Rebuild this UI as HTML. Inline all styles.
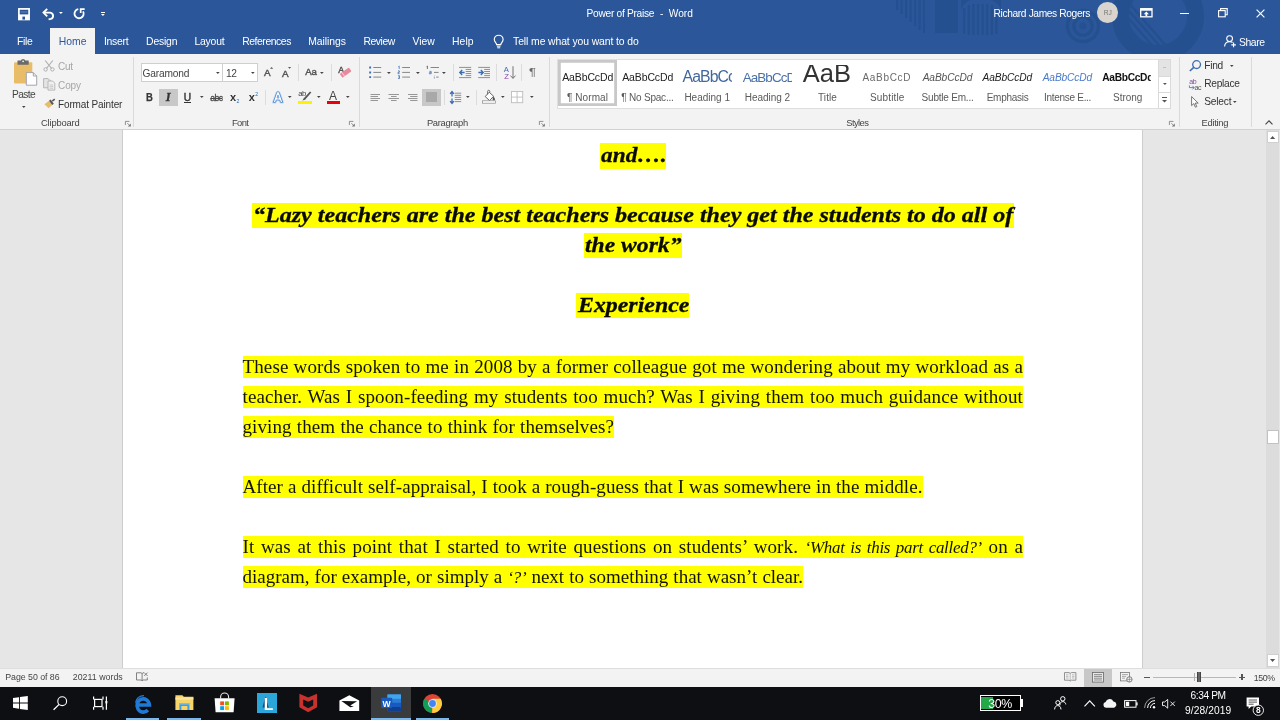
<!DOCTYPE html>
<html lang="en"><head><meta charset="utf-8"><title>Power of Praise - Word</title>
<style>
*{box-sizing:border-box;margin:0;padding:0}
html,body{width:1280px;height:720px;overflow:hidden;background:#e6e6e6;font-family:"Liberation Sans",sans-serif;font-size:10px;color:#444}
.t{position:absolute;white-space:nowrap;display:block}
.i{position:absolute;display:block;overflow:visible}
.b{position:absolute}
#titlebar{position:absolute;left:0;top:0;width:1280px;height:54px;background:#2b579a;overflow:hidden}
#hometab{position:absolute;left:50.4px;top:28.4px;width:44.2px;height:26px;background:#f3f3f3}
#ribbon{position:absolute;left:0;top:54px;width:1280px;height:75.6px;background:#f3f3f3;border-bottom:1px solid #d2d2d2}
#doc{position:absolute;left:0;top:130px;width:1280px;height:538px;background:#e6e6e6;overflow:hidden}
#page{position:absolute;left:122px;top:0;width:1021px;height:538px;background:#fff;border-left:1px solid #cdcdcd;border-right:1px solid #cdcdcd}
#status{position:absolute;left:0;top:668px;width:1280px;height:19px;background:#f3f3f3;border-top:1px solid #dedede}
#taskbar{position:absolute;left:0;top:687px;width:1280px;height:33px;background:#0e0f12}
.ln{position:absolute;left:242.5px;width:780.5px;height:22.4px;font-family:"Liberation Serif",serif;font-size:19px;line-height:22.4px;color:#141400;white-space:nowrap;background:#ffff00;text-align:justify;text-align-last:justify;letter-spacing:0.12px}
.hd{position:absolute;height:25.6px;font-family:"Liberation Serif",serif;font-size:22px;line-height:25.6px;color:#0a0a00;white-space:nowrap;background:#ffff00;font-weight:bold;font-style:italic;text-align:left}
.hd span{position:relative;top:-0.6px;left:1.2px;display:inline-block;transform-origin:0 50%;-webkit-text-stroke:0.3px #0a0a00}
#root{position:absolute;left:0;top:0;width:1280px;height:720px;will-change:transform}
.ln i{font-size:17px;letter-spacing:-0.3px}
</style></head><body>
<div id="root">
<div id="titlebar">
<svg class="i" style="left:840px;top:0" width="440" height="54" viewBox="840 0 440 54">
<g fill="#1f4a88" opacity="0.5">
<rect x="896" y="0" width="2.2" height="10"/><rect x="900.5" y="0" width="2.2" height="14"/><rect x="905" y="0" width="2.2" height="18"/><rect x="909.5" y="0" width="2.2" height="22"/><rect x="914" y="0" width="2.2" height="26"/><rect x="918.5" y="0" width="2.2" height="30"/><rect x="923" y="0" width="2.2" height="33"/>
<path d="M935 0h23v33h-23z"/>
<path d="M961 0h40v12a20 14 0 0 0-40 0z"/>
<rect x="963" y="8" width="2.4" height="26"/><rect x="967.6" y="5" width="2.4" height="30"/><rect x="972.2" y="4" width="2.4" height="31"/><rect x="976.8" y="4" width="2.4" height="31"/><rect x="981.4" y="4" width="2.4" height="31"/><rect x="986" y="4" width="2.4" height="31"/><rect x="990.6" y="5" width="2.4" height="30"/><rect x="995.2" y="8" width="2.4" height="26"/>
<circle cx="1083" cy="26" r="3.6"/>
</g>
<g fill="none" stroke="#1f4a88" opacity="0.5">
<circle cx="1083" cy="26" r="15.5" stroke-width="3.4"/><circle cx="1083" cy="26" r="9.2" stroke-width="3.4"/>
<circle cx="1158" cy="16" r="37.5" stroke-width="17"/>
<path d="M1108 4l44 50M1114 2l46 52M1121 2l44 50M1128 2l40 46" stroke-width="2.6"/>
</g></svg>
<div id="hometab"></div>
<svg class="i" style="left:18px;top:7.6px;" width="12" height="12.4" viewBox="0 0 12 12.4"><rect x="0.9" y="0.9" width="10.2" height="10.6" fill="none" stroke="#fff" stroke-width="1.7"/><rect x="0.9" y="6.4" width="10.2" height="5.1" fill="#fff"/><rect x="4.4" y="8.6" width="2.6" height="3" fill="#2b579a"/><rect x="2.6" y="3.6" width="6.8" height="0.8" fill="#fff" opacity="0.35"/></svg>
<svg class="i" style="left:42px;top:8px;" width="14" height="12" viewBox="0 0 14 12"><path d="M1.6 4.6h6.6a3.6 3.3 0 0 1 0.6 6.3l-2.2 0.5" fill="none" stroke="#fff" stroke-width="1.9"/><path d="M5.2 0.9L1.5 4.6 5.2 8.3" fill="none" stroke="#fff" stroke-width="1.9"/></svg>
<svg class="i" style="left:59.4px;top:12px;" width="3.8" height="2" viewBox="0 0 3.8 2"><path d="M0 0H3.8 L1.9 2 Z" fill="#fff"/></svg>
<svg class="i" style="left:72.6px;top:7.4px;" width="12.4" height="12.6" viewBox="0 0 12.4 12.6"><path d="M5.3 2.1A4.6 4.6 0 1 0 10.1 4.4" fill="none" stroke="#fff" stroke-width="1.8"/><path d="M7.7 5.9V2.1H11.7" fill="none" stroke="#fff" stroke-width="1.7"/></svg>
<div class="b" style="left:101px;top:12px;width:3.8px;height:1px;background:#fff"></div>
<svg class="i" style="left:101px;top:14px;" width="3.8" height="2" viewBox="0 0 3.8 2"><path d="M0 0H3.8 L1.9 2 Z" fill="#fff"/></svg>
<span class="t" id="t0" style="left:586.60px;top:8.57px;font-size:10.2px;line-height:10.2px;color:#fff;letter-spacing:-0.294px;">Power of Praise</span>
<span class="t" id="t1" style="left:660.00px;top:8.57px;font-size:10.2px;line-height:10.2px;color:#fff;letter-spacing:0.000px;">-</span>
<span class="t" id="t2" style="left:668.75px;top:8.57px;font-size:10.2px;line-height:10.2px;color:#fff;letter-spacing:-0.011px;">Word</span>
<span class="t" id="t3" style="left:993.60px;top:9.07px;font-size:10.2px;line-height:10.2px;color:#fff;letter-spacing:-0.361px;">Richard James Rogers</span>
<div class="b" style="left:1097.4px;top:2.1px;width:20.6px;height:20.6px;border-radius:50%;background:#d9d4cd"></div>
<span class="t" id="t4" style="left:1103.80px;top:10.01px;font-size:6.6px;line-height:6.6px;color:#777;letter-spacing:-0.033px;">RJ</span>
<svg class="i" style="left:1140px;top:8px;" width="13" height="9.5" viewBox="0 0 13 9.5"><rect x="0.7" y="0.7" width="11.3" height="8.1" fill="none" stroke="#fff" stroke-width="1.3"/><rect x="0.7" y="0.7" width="11.3" height="2" fill="#fff"/><path d="M6.35 3.6l2.6 2.6h-1.7v1.9h-1.8v-1.9h-1.7z" fill="#fff"/></svg>
<div class="b" style="left:1180.4px;top:12.9px;width:8.4px;height:1.1px;background:#fff"></div>
<svg class="i" style="left:1217.5px;top:8px;" width="10" height="9.5" viewBox="0 0 10 9.5"><rect x="0.6" y="2.6" width="6.6" height="6.2" fill="none" stroke="#fff" stroke-width="1.1"/><path d="M2.6 2.6V0.6h6.6v6.2h-2" fill="none" stroke="#fff" stroke-width="1.1"/></svg>
<svg class="i" style="left:1256px;top:8.5px;" width="9" height="9" viewBox="0 0 9 9"><path d="M0.6 0.6l7.8 7.8M8.4 0.6l-7.8 7.8" stroke="#fff" stroke-width="1.15" fill="none"/></svg>
<span class="t" id="t5" style="left:16.90px;top:36.60px;font-size:10.4px;line-height:10.4px;color:#fff;letter-spacing:-0.281px;">File</span>
<span class="t" id="t6" style="left:58.75px;top:36.60px;font-size:10.4px;line-height:10.4px;color:#2b579a;letter-spacing:0.039px;">Home</span>
<span class="t" id="t7" style="left:104.00px;top:36.60px;font-size:10.4px;line-height:10.4px;color:#fff;letter-spacing:-0.271px;">Insert</span>
<span class="t" id="t8" style="left:146.10px;top:36.60px;font-size:10.4px;line-height:10.4px;color:#fff;letter-spacing:-0.206px;">Design</span>
<span class="t" id="t9" style="left:194.40px;top:36.60px;font-size:10.4px;line-height:10.4px;color:#fff;letter-spacing:-0.180px;">Layout</span>
<span class="t" id="t10" style="left:242.20px;top:36.60px;font-size:10.4px;line-height:10.4px;color:#fff;letter-spacing:-0.442px;">References</span>
<span class="t" id="t11" style="left:308.20px;top:36.60px;font-size:10.4px;line-height:10.4px;color:#fff;letter-spacing:-0.063px;">Mailings</span>
<span class="t" id="t12" style="left:363.40px;top:36.60px;font-size:10.4px;line-height:10.4px;color:#fff;letter-spacing:-0.426px;">Review</span>
<span class="t" id="t13" style="left:412.60px;top:36.60px;font-size:10.4px;line-height:10.4px;color:#fff;letter-spacing:-0.055px;">View</span>
<span class="t" id="t14" style="left:452.00px;top:36.60px;font-size:10.4px;line-height:10.4px;color:#fff;letter-spacing:0.087px;">Help</span>
<svg class="i" style="left:492.5px;top:34.5px;" width="11.5" height="14" viewBox="0 0 11.5 14"><path d="M3.6 9.6c0-1.6-2.3-2.4-2.3-5a4.4 4.4 0 0 1 8.8 0c0 2.6-2.3 3.4-2.3 5z" fill="none" stroke="#fff" stroke-width="1.15"/><path d="M3.9 11.2h3.6M4.2 12.8h3" stroke="#fff" stroke-width="1"/></svg>
<span class="t" id="t15" style="left:513.10px;top:36.60px;font-size:10.4px;line-height:10.4px;color:#fff;letter-spacing:-0.100px;">Tell me what you want to do</span>
<svg class="i" style="left:1224px;top:35px;" width="12.5" height="12.5" viewBox="0 0 12.5 12.5"><circle cx="5.6" cy="3.6" r="2.9" fill="none" stroke="#fff" stroke-width="1.1"/><path d="M0.6 11.6c0-3.2 2.2-5 5-5 1.2 0 2.2 0.3 3 0.9" fill="none" stroke="#fff" stroke-width="1.1"/><path d="M9.6 7.6v4.6M7.3 9.9h4.6" stroke="#fff" stroke-width="1.1"/></svg>
<span class="t" id="t16" style="left:1239.00px;top:37.50px;font-size:10.4px;line-height:10.4px;color:#fff;letter-spacing:-0.422px;">Share</span>
</div>
<div id="ribbon"></div>
<svg class="i" style="left:13px;top:59px;" width="25" height="27" viewBox="0 0 25 27"><rect x="1" y="3.2" width="18.3" height="21.3" rx="1" fill="#e9bd68"/><path d="M4.5 1.6h3.3a2.4 2.4 0 0 1 4.6 0h3.3v4.2H4.5z" fill="#6a6a6a"/><circle cx="10.1" cy="2.3" r="0.9" fill="#f3f3f3"/><path d="M13.3 13.6h7l3.4 3.4v9.2H13.3z" fill="#fff" stroke="#9a9aa8" stroke-width="0.9"/><path d="M20.3 13.6v3.4h3.4" fill="none" stroke="#9a9aa8" stroke-width="0.9"/></svg>
<span class="t" id="t17" style="left:12.00px;top:89.77px;font-size:10.2px;line-height:10.2px;color:#444;letter-spacing:-0.590px;">Paste</span>
<svg class="i" style="left:21.7px;top:106.2px;" width="3.6" height="1.9" viewBox="0 0 3.6 1.9"><path d="M0 0H3.6 L1.8 1.9 Z" fill="#444"/></svg>
<svg class="i" style="left:43px;top:60.3px;" width="12" height="11.5" viewBox="0 0 12 11.5"><path d="M2.2 0.5l6.4 8M9.8 0.5l-6.4 8" stroke="#b0b0b0" stroke-width="1.2" fill="none"/><circle cx="2.6" cy="9.4" r="1.7" fill="none" stroke="#b0b0b0" stroke-width="1"/><circle cx="9.4" cy="9.4" r="1.7" fill="none" stroke="#b0b0b0" stroke-width="1"/></svg>
<span class="t" id="t18" style="left:58.00px;top:62.03px;font-size:10px;line-height:10px;color:#a6a6a6;letter-spacing:-0.254px;">Cut</span>
<svg class="i" style="left:43px;top:78.3px;" width="12.5" height="12.6" viewBox="0 0 12.5 12.6"><path d="M0.6 0.6h4.6l2 2v7.2H0.6z" fill="#e4e4e4" stroke="#b0b0b0" stroke-width="0.9"/><path d="M5 3h4.6l2.2 2.2v6.9H5z" fill="#f0f0f0" stroke="#b0b0b0" stroke-width="0.9"/><path d="M6.6 7h3.6M6.6 8.6h3.6M6.6 10.2h3.6" stroke="#b8b8b8" stroke-width="0.7"/></svg>
<span class="t" id="t19" style="left:58.00px;top:80.83px;font-size:10px;line-height:10px;color:#a6a6a6;letter-spacing:-0.090px;">Copy</span>
<svg class="i" style="left:43.5px;top:98px;" width="11.8" height="10.6" viewBox="0 0 11.8 10.6"><path d="M0.4 6.2l4.6-3.4 3.2 4.2-3.6 3.2z" fill="#e9bd68"/><path d="M5 2.8l1.6-1.2 3.2 4.2-1.6 1.2z" fill="#555"/><path d="M7.8 2.6l2.4-2 1 1.2-2.4 2z" fill="#555"/></svg>
<span class="t" id="t20" style="left:58.00px;top:99.73px;font-size:10px;line-height:10px;color:#333;letter-spacing:-0.131px;">Format Painter</span>
<span class="t" id="t21" style="left:41.00px;top:118.24px;font-size:9.4px;line-height:9.4px;color:#444;letter-spacing:-0.175px;">Clipboard</span>
<svg class="i" style="left:124.6px;top:120.6px;" width="6.4" height="5.6" viewBox="0 0 6.4 5.6"><path d="M0.4 4V0.4h4" fill="none" stroke="#777" stroke-width="0.8"/><path d="M2.4 2.2l2.6 2.6" stroke="#777" stroke-width="0.8"/><path d="M5.8 2.6v3h-3z" fill="#777"/></svg>
<div class="b" style="left:133px;top:57px;width:1px;height:70px;background:#dadada"></div>
<div class="b" style="left:140.6px;top:63.4px;width:82.8px;height:18.3px;background:#fff;border:1px solid #cfcfcf"></div>
<div class="b" style="left:222.4px;top:63.4px;width:35.3px;height:18.3px;background:#fff;border:1px solid #cfcfcf"></div>
<span class="t" id="t22" style="left:142.60px;top:68.97px;font-size:10.2px;line-height:10.2px;color:#444;letter-spacing:-0.172px;">Garamond</span>
<svg class="i" style="left:216.3px;top:71.8px;" width="3.7" height="2" viewBox="0 0 3.7 2"><path d="M0 0H3.7 L1.85 2 Z" fill="#444"/></svg>
<span class="t" id="t23" style="left:226.00px;top:68.97px;font-size:10.2px;line-height:10.2px;color:#444;letter-spacing:-0.366px;">12</span>
<svg class="i" style="left:250.6px;top:71.8px;" width="3.7" height="2" viewBox="0 0 3.7 2"><path d="M0 0H3.7 L1.85 2 Z" fill="#444"/></svg>
<span class="t" id="t24" style="left:264.00px;top:67.92px;font-size:9.9px;line-height:9.9px;color:#555;letter-spacing:0.000px;-webkit-text-stroke:0.45px #555;">A</span>
<svg class="i" style="left:270px;top:66.5px;" width="3.2" height="1.8" viewBox="0 0 3.2 1.8"><path d="M0 1.8L1.6 0 3.2 1.8z" fill="#555"/></svg>
<span class="t" id="t25" style="left:282.10px;top:68.62px;font-size:9.9px;line-height:9.9px;color:#555;letter-spacing:0.000px;-webkit-text-stroke:0.45px #555;">A</span>
<svg class="i" style="left:288px;top:66.5px;" width="3.2" height="1.8" viewBox="0 0 3.2 1.8"><path d="M0 0h3.2L1.6 1.8z" fill="#555"/></svg>
<div class="b" style="left:298.3px;top:64px;width:1px;height:16.5px;background:#dcdcdc"></div>
<span class="t" id="t26" style="left:305.30px;top:67.37px;font-size:9.6px;line-height:9.6px;color:#555;letter-spacing:-0.137px;-webkit-text-stroke:0.45px #555;">Aa</span>
<svg class="i" style="left:320px;top:71.8px;" width="3.7" height="2" viewBox="0 0 3.7 2"><path d="M0 0H3.7 L1.85 2 Z" fill="#444"/></svg>
<div class="b" style="left:330.8px;top:64px;width:1px;height:16.5px;background:#dcdcdc"></div>
<span class="t" id="t27" style="left:338.20px;top:65.65px;font-size:8.8px;line-height:8.8px;color:#555;letter-spacing:0.000px;-webkit-text-stroke:0.45px #555;">A</span>
<svg class="i" style="left:338px;top:66px;" width="14" height="13" viewBox="338 66 14 13"><g transform="rotate(-36 345.6 72.6)"><rect x="340" y="70.3" width="11.2" height="4.6" rx="0.8" fill="#e88a9c"/><rect x="342.2" y="70.3" width="0.9" height="4.6" fill="#f6cdd5"/></g></svg>
<span class="t" id="t28" style="left:146.10px;top:92.88px;font-size:10.3px;line-height:10.3px;color:#383838;letter-spacing:0.000px;font-weight:bold;transform:scaleX(0.92);transform-origin:0 0;-webkit-text-stroke:0.25px #383838;">B</span>
<div class="b" style="left:159.4px;top:88.75px;width:18.5px;height:17.7px;background:#c8c8c8"></div>
<span class="t" id="t29" style="left:165.80px;top:91.25px;font-size:12.6px;line-height:12.6px;color:#333;letter-spacing:0.000px;font-family:'Liberation Serif',serif;font-style:italic;font-weight:bold;-webkit-text-stroke:0.3px #333;">I</span>
<span class="t" id="t30" style="left:183.80px;top:92.57px;font-size:10.2px;line-height:10.2px;color:#333;letter-spacing:0.000px;-webkit-text-stroke:0.4px #333;">U</span>
<div class="b" style="left:183.6px;top:102px;width:7px;height:1px;background:#333"></div>
<svg class="i" style="left:199.8px;top:96.4px;" width="3.6" height="2" viewBox="0 0 3.6 2"><path d="M0 0H3.6 L1.8 2 Z" fill="#444"/></svg>
<span class="t" id="t31" style="left:210.20px;top:94.32px;font-size:8.6px;line-height:8.6px;color:#4a4a4a;letter-spacing:-0.514px;text-decoration:line-through;-webkit-text-stroke:0.3px #4a4a4a;">abc</span>
<span class="t" id="t32" style="left:230.00px;top:92.29px;font-size:11px;line-height:11px;color:#333;letter-spacing:0.135px;font-weight:bold">x</span>
<span class="t" id="t33" style="left:236.40px;top:99.00px;font-size:5.2px;line-height:5.2px;color:#2b6cb5;letter-spacing:0.000px;">2</span>
<span class="t" id="t34" style="left:248.80px;top:92.29px;font-size:11px;line-height:11px;color:#333;letter-spacing:0.135px;font-weight:bold">x</span>
<span class="t" id="t35" style="left:255.20px;top:92.20px;font-size:5.2px;line-height:5.2px;color:#2b6cb5;letter-spacing:0.000px;">2</span>
<div class="b" style="left:265.4px;top:89.75px;width:1px;height:15.6px;background:#dcdcdc"></div>
<svg class="i" style="left:271px;top:90px;" width="14" height="14.6" viewBox="0 0 14 14.6"><path d="M2.2 12.4L5.7 2.6a1.4 1.4 0 0 1 2.6 0L11.8 12.4H9.5L8.7 10H5.3L4.5 12.4z" fill="none" stroke="#cfe0f4" stroke-width="2.6" stroke-linejoin="round"/><path d="M2.2 12.4L5.7 2.6a1.4 1.4 0 0 1 2.6 0L11.8 12.4H9.5L8.7 10H5.3L4.5 12.4z" fill="#fff" stroke="#5b93d6" stroke-width="1" stroke-linejoin="round"/><path d="M6 8l1-3 1 3z" fill="#fff" stroke="#5b93d6" stroke-width="0.8" stroke-linejoin="round"/></svg>
<svg class="i" style="left:287.5px;top:96.4px;" width="3.6" height="2" viewBox="0 0 3.6 2"><path d="M0 0H3.6 L1.8 2 Z" fill="#444"/></svg>
<span class="t" id="t36" style="left:298.20px;top:89.90px;font-size:7.8px;line-height:7.8px;color:#444;letter-spacing:0.000px;letter-spacing:-0.4px;">ab</span>
<svg class="i" style="left:300px;top:90px;" width="13" height="12" viewBox="300 90 13 12"><path d="M302.4 100.4l1.2-2 6.4-7 1.3 1.2-6.2 7.2z" fill="#555"/></svg>
<div class="b" style="left:297.5px;top:100.6px;width:14.4px;height:3.5px;background:#fbf300"></div>
<svg class="i" style="left:316.9px;top:96.4px;" width="3.6" height="2" viewBox="0 0 3.6 2"><path d="M0 0H3.6 L1.8 2 Z" fill="#444"/></svg>
<span class="t" id="t37" style="left:329.10px;top:90.24px;font-size:12px;line-height:12px;color:#444;letter-spacing:0.000px;">A</span>
<div class="b" style="left:326.7px;top:100.6px;width:13.3px;height:3.5px;background:#e8000d"></div>
<svg class="i" style="left:345.6px;top:96.4px;" width="3.6" height="2" viewBox="0 0 3.6 2"><path d="M0 0H3.6 L1.8 2 Z" fill="#444"/></svg>
<span class="t" id="t38" style="left:231.90px;top:118.24px;font-size:9.4px;line-height:9.4px;color:#444;letter-spacing:-0.588px;">Font</span>
<svg class="i" style="left:349.4px;top:120.6px;" width="6.4" height="5.6" viewBox="0 0 6.4 5.6"><path d="M0.4 4V0.4h4" fill="none" stroke="#777" stroke-width="0.8"/><path d="M2.4 2.2l2.6 2.6" stroke="#777" stroke-width="0.8"/><path d="M5.8 2.6v3h-3z" fill="#777"/></svg>
<div class="b" style="left:358.8px;top:57px;width:1px;height:70px;background:#dadada"></div>
<svg class="i" style="left:366px;top:64px;" width="84" height="16" viewBox="366 64 84 16"><path d="M373.3 67.5H381.2M373.3 72.4H381.2M373.3 77.1H381.2M402.2 67.5H410M402.2 72.4H410M402.2 77.1H410M430.6 67.5H439M434 72.4H438.6M436.2 77.1H438.6" stroke="#868686" stroke-width="1" fill="none"/><path d="M369.2 66.6h1.9v1.9h-1.9zM369.2 71.5h1.9v1.9h-1.9zM369.2 76.2h1.9v1.9h-1.9z" fill="#3a6cb4"/><path d="M398.4 66.6l0.8-0.6v3M398 70.9h1.4v1.4h-1.4v1.4h1.6M398 75.7h1.5v2.8h-1.5M398.4 77.1h1" stroke="#3a6cb4" stroke-width="0.75" fill="none"/><path d="M426.6 66.6l0.8-0.6v3" stroke="#555" stroke-width="0.8" fill="none"/><path d="M429.4 71.4h1.8v2.4h-1.8v-1.2h1.8" stroke="#3a6cb4" stroke-width="0.7" fill="none"/><path d="M434.4 75.6v0.6M434.4 76.8v1.8" stroke="#7c8fb0" stroke-width="0.8" fill="none"/></svg>
<svg class="i" style="left:387.4px;top:71.9px;" width="3.8" height="2" viewBox="0 0 3.8 2"><path d="M0 0H3.8 L1.9 2 Z" fill="#444"/></svg>
<svg class="i" style="left:416.1px;top:71.9px;" width="3.8" height="2" viewBox="0 0 3.8 2"><path d="M0 0H3.8 L1.9 2 Z" fill="#444"/></svg>
<svg class="i" style="left:442px;top:71.9px;" width="3.8" height="2" viewBox="0 0 3.8 2"><path d="M0 0H3.8 L1.9 2 Z" fill="#444"/></svg>
<div class="b" style="left:452.8px;top:64px;width:1px;height:16.5px;background:#dcdcdc"></div>
<svg class="i" style="left:457px;top:65px;" width="35" height="15" viewBox="457 65 35 15"><path d="M459 67.4H471.2M465.7 69.45H471.2M465.7 71.5H471.2M465.7 73.55H471.2M465.7 75.6H471.2M459 77.6H471.2M478.2 67.4H490M484.2 69.45H490M484.2 71.5H490M484.2 73.55H490M484.2 75.6H490M478.2 77.6H490" stroke="#8a8a8a" stroke-width="0.95" fill="none"/><path d="M464.6 72.5H460M462.2 70.1L459.8 72.5l2.4 2.4M478.4 72.5H483M480.8 70.1l2.4 2.4-2.4 2.4" stroke="#3a6cb4" stroke-width="1.35" fill="none"/></svg>
<div class="b" style="left:496.3px;top:64px;width:1px;height:16.5px;background:#dcdcdc"></div>
<span class="t" id="t39" style="left:503.80px;top:65.77px;font-size:7.6px;line-height:7.6px;color:#3a6cb4;letter-spacing:0.000px;">A</span>
<span class="t" id="t40" style="left:504.20px;top:73.37px;font-size:7.6px;line-height:7.6px;color:#8a4aa8;letter-spacing:0.000px;">Z</span>
<svg class="i" style="left:509.6px;top:66px;" width="6" height="13" viewBox="0 0 6 13"><path d="M3 0.2v12M0.5 9.6l2.5 2.8L5.5 9.6" stroke="#666" stroke-width="0.9" fill="none"/></svg>
<div class="b" style="left:520.8px;top:64px;width:1px;height:16.5px;background:#dcdcdc"></div>
<span class="t" id="t41" style="left:528.80px;top:66.92px;font-size:11.2px;line-height:11.2px;color:#666;letter-spacing:0.000px;transform:scaleX(1.15);transform-origin:0 0;">¶</span>
<svg class="i" style="left:368px;top:92px;" width="52" height="11" viewBox="368 92 52 11"><path d="M370.5 94.5H380M370.5 96.5H378M370.5 98.5H380M370.5 100.5H378M388.5 94.5H399M391 96.5H396.6M388.5 98.5H399M391 100.5H396.6M408 94.5H417.5M410.2 96.5H417.5M408 98.5H417.5M410.2 100.5H417.5" stroke="#909090" stroke-width="0.95" fill="none"/></svg>
<div class="b" style="left:421.9px;top:88.75px;width:18.7px;height:17.7px;background:#c8c8c8"></div>
<div class="b" style="left:426.2px;top:92.2px;width:10.7px;height:10.2px;background:#a9a9a9"></div>
<div class="b" style="left:443.6px;top:89.75px;width:1px;height:15.6px;background:#dcdcdc"></div>
<svg class="i" style="left:448px;top:90px;" width="15" height="15" viewBox="448 90 15 15"><path d="M454.8 93.2H461.2M454.8 95.3H461.2M454.8 97.4H461.2M454.8 99.5H461.2M454.8 101.6H461.2" stroke="#8a8a8a" stroke-width="0.95" fill="none"/><path d="M452 92v4.6M450.1 93.9L452 91.5l1.9 2.4M452 98.4V103M450.1 101.1l1.9 2.4 1.9-2.4" stroke="#3a6cb4" stroke-width="1.3" fill="none"/></svg>
<svg class="i" style="left:465.5px;top:96.4px;" width="3.7" height="2" viewBox="0 0 3.7 2"><path d="M0 0H3.7 L1.85 2 Z" fill="#444"/></svg>
<div class="b" style="left:476.1px;top:89.75px;width:1px;height:15.6px;background:#dcdcdc"></div>
<svg class="i" style="left:482px;top:90.2px;" width="14" height="13.6" viewBox="0 0 14 13.6"><path d="M3.2 6.6l4-4.4 4.4 4-4 4.4z" fill="#fff" stroke="#555" stroke-width="0.9"/><path d="M5.6 4.4V1.4a1.1 1.1 0 0 1 2.2 0v1" fill="none" stroke="#555" stroke-width="0.8"/><path d="M11.4 6.4c1 1.2 1.6 2 1.6 2.8a1.2 1.2 0 0 1-2.4 0c0-0.8 0.4-1.6 0.8-2.8z" fill="#555"/><rect x="0.5" y="10.8" width="13" height="2.4" fill="#fff" stroke="#8a8a8a" stroke-width="0.7"/></svg>
<svg class="i" style="left:500.7px;top:96.4px;" width="3.7" height="2" viewBox="0 0 3.7 2"><path d="M0 0H3.7 L1.85 2 Z" fill="#444"/></svg>
<svg class="i" style="left:510.8px;top:91px;" width="12.2" height="12.2" viewBox="0 0 12.2 12.2"><rect x="0.5" y="0.5" width="11.2" height="11.2" fill="#fff" stroke="#bdbdbd" stroke-width="0.9"/><path d="M6.1 0.5v11.2M0.5 6.1h11.2" stroke="#bdbdbd" stroke-width="0.9"/></svg>
<svg class="i" style="left:529.5px;top:96.4px;" width="3.7" height="2" viewBox="0 0 3.7 2"><path d="M0 0H3.7 L1.85 2 Z" fill="#444"/></svg>
<span class="t" id="t42" style="left:426.90px;top:118.14px;font-size:9.4px;line-height:9.4px;color:#444;letter-spacing:-0.319px;">Paragraph</span>
<svg class="i" style="left:539px;top:120.6px;" width="6.4" height="5.6" viewBox="0 0 6.4 5.6"><path d="M0.4 4V0.4h4" fill="none" stroke="#777" stroke-width="0.8"/><path d="M2.4 2.2l2.6 2.6" stroke="#777" stroke-width="0.8"/><path d="M5.8 2.6v3h-3z" fill="#777"/></svg>
<div class="b" style="left:548.6px;top:57px;width:1px;height:70px;background:#dadada"></div>
<div class="b" style="left:556.6px;top:59.4px;width:614px;height:49.2px;background:#fff;border:1px solid #dedede"></div>
<div class="b" style="left:557.6px;top:60.4px;width:59.4px;height:45.8px;background:#fff;box-shadow:inset 0 0 0 2.8px #c8c8c8"></div>
<span class="t" id="t43" style="left:562.25px;top:72.11px;font-size:10.5px;line-height:10.5px;color:#222;letter-spacing:-0.134px;">AaBbCcDd</span>
<span class="t" id="t44" style="left:566.90px;top:92.73px;font-size:10px;line-height:10px;color:#5a5a5a;letter-spacing:0.101px;">¶ Normal</span>
<span class="t" id="t45" style="left:622.25px;top:72.11px;font-size:10.5px;line-height:10.5px;color:#222;letter-spacing:-0.134px;">AaBbCcDd</span>
<span class="t" id="t46" style="left:621.25px;top:92.73px;font-size:10px;line-height:10px;color:#5a5a5a;letter-spacing:-0.208px;">¶ No Spac...</span>
<div class="b" style="left:680px;top:62px;width:51.8px;height:26px;overflow:hidden">
<span class="t" id="t47" style="left:2.50px;top:7.48px;font-size:15.8px;line-height:15.8px;color:#41679f;letter-spacing:0.000px;letter-spacing:-0.9px;">AaBbCcDd</span>
</div>
<span class="t" id="t48" style="left:684.40px;top:92.73px;font-size:10px;line-height:10px;color:#5a5a5a;letter-spacing:0.001px;">Heading 1</span>
<div class="b" style="left:740px;top:62px;width:51.7px;height:26px;overflow:hidden">
<span class="t" id="t49" style="left:2.70px;top:8.56px;font-size:13.4px;line-height:13.4px;color:#4a70a8;letter-spacing:0.000px;letter-spacing:-0.88px;">AaBbCcDd</span>
</div>
<span class="t" id="t50" style="left:744.70px;top:92.73px;font-size:10px;line-height:10px;color:#5a5a5a;letter-spacing:-0.022px;">Heading 2</span>
<div class="b" style="left:800px;top:65px;width:52px;height:22px;overflow:hidden">
<span class="t" id="t51" style="left:2.80px;top:-4.19px;font-size:25.5px;line-height:25.5px;color:#333;letter-spacing:-0.024px;">AaB</span>
</div>
<span class="t" id="t52" style="left:818.00px;top:92.73px;font-size:10px;line-height:10px;color:#5a5a5a;letter-spacing:0.094px;">Title</span>
<div class="b" style="left:860px;top:62px;width:50.6px;height:26px;overflow:hidden">
<span class="t" id="t53" style="left:2.50px;top:10.84px;font-size:10px;line-height:10px;color:#6a6a6a;letter-spacing:0.000px;letter-spacing:0.68px;">AaBbCcDd</span>
</div>
<span class="t" id="t54" style="left:870.00px;top:92.73px;font-size:10px;line-height:10px;color:#5a5a5a;letter-spacing:0.143px;">Subtitle</span>
<span class="t" id="t55" style="left:922.70px;top:72.67px;font-size:10.2px;line-height:10.2px;color:#555;letter-spacing:-0.112px;font-style:italic">AaBbCcDd</span>
<span class="t" id="t56" style="left:921.60px;top:92.73px;font-size:10px;line-height:10px;color:#5a5a5a;letter-spacing:-0.206px;">Subtle Em...</span>
<span class="t" id="t57" style="left:982.50px;top:72.67px;font-size:10.2px;line-height:10.2px;color:#222;letter-spacing:-0.087px;font-style:italic">AaBbCcDd</span>
<span class="t" id="t58" style="left:986.70px;top:92.73px;font-size:10px;line-height:10px;color:#5a5a5a;letter-spacing:-0.251px;">Emphasis</span>
<span class="t" id="t59" style="left:1042.70px;top:72.67px;font-size:10.2px;line-height:10.2px;color:#4a7ac8;letter-spacing:-0.124px;font-style:italic">AaBbCcDd</span>
<span class="t" id="t60" style="left:1044.00px;top:92.73px;font-size:10px;line-height:10px;color:#5a5a5a;letter-spacing:-0.291px;">Intense E...</span>
<div class="b" style="left:1100px;top:62px;width:50.8px;height:26px;overflow:hidden">
<span class="t" id="t61" style="left:2.30px;top:10.67px;font-size:10.2px;line-height:10.2px;color:#111;letter-spacing:0.000px;font-weight:bold;letter-spacing:-0.3px;">AaBbCcDd</span>
</div>
<span class="t" id="t62" style="left:1113.00px;top:92.73px;font-size:10px;line-height:10px;color:#5a5a5a;letter-spacing:-0.028px;">Strong</span>
<div class="b" style="left:1158.4px;top:59.4px;width:12.2px;height:17.4px;background:#e4e4e4;border:1px solid #dadada"></div>
<div class="b" style="left:1158.4px;top:76.2px;width:12.2px;height:16.4px;background:#fff;border:1px solid #dadada"></div>
<div class="b" style="left:1158.4px;top:92px;width:12.2px;height:16.6px;background:#fff;border:1px solid #dadada"></div>
<div class="b" style="left:1162.8px;top:67.4px;width:3.4px;height:1px;background:#c0c0c0"></div>
<svg class="i" style="left:1162.6px;top:83.4px;" width="3.8" height="2" viewBox="0 0 3.8 2"><path d="M0 0H3.8 L1.9 2 Z" fill="#555"/></svg>
<div class="b" style="left:1161.8px;top:97.4px;width:5.4px;height:1px;background:#555"></div>
<svg class="i" style="left:1162px;top:99.8px;" width="5" height="2.6" viewBox="0 0 5 2.6"><path d="M0 0H5 L2.5 2.6 Z" fill="#555"/></svg>
<span class="t" id="t63" style="left:846.25px;top:118.14px;font-size:9.4px;line-height:9.4px;color:#444;letter-spacing:-0.586px;">Styles</span>
<svg class="i" style="left:1169.2px;top:120.6px;" width="6.4" height="5.6" viewBox="0 0 6.4 5.6"><path d="M0.4 4V0.4h4" fill="none" stroke="#777" stroke-width="0.8"/><path d="M2.4 2.2l2.6 2.6" stroke="#777" stroke-width="0.8"/><path d="M5.8 2.6v3h-3z" fill="#777"/></svg>
<div class="b" style="left:1179.2px;top:57px;width:1px;height:70px;background:#dadada"></div>
<svg class="i" style="left:1189.4px;top:60px;" width="12.4" height="11.6" viewBox="0 0 12.4 11.6"><circle cx="7.6" cy="4.6" r="3.9" fill="none" stroke="#3a6cb4" stroke-width="1.3"/><path d="M4.8 7.4L0.8 11" stroke="#3a6cb4" stroke-width="1.6"/></svg>
<span class="t" id="t64" style="left:1204.20px;top:61.27px;font-size:10.2px;line-height:10.2px;color:#333;letter-spacing:-0.254px;">Find</span>
<svg class="i" style="left:1230.2px;top:64.8px;" width="3.6" height="2" viewBox="0 0 3.6 2"><path d="M0 0H3.6 L1.8 2 Z" fill="#444"/></svg>
<span class="t" id="t65" style="left:1189.20px;top:78.07px;font-size:7px;line-height:7px;color:#7a4a9a;letter-spacing:0.000px;letter-spacing:-0.4px;">ab</span>
<span class="t" id="t66" style="left:1194.60px;top:83.87px;font-size:7px;line-height:7px;color:#555;letter-spacing:0.000px;letter-spacing:-0.4px;">ac</span>
<svg class="i" style="left:1188.8px;top:85px;" width="6" height="4.6" viewBox="0 0 6 4.6"><path d="M0.4 0.4v2.2h4.6M3.4 0.8l1.8 1.8-1.8 1.8" stroke="#3a6cb4" stroke-width="0.8" fill="none"/></svg>
<span class="t" id="t67" style="left:1204.20px;top:79.22px;font-size:10.2px;line-height:10.2px;color:#333;letter-spacing:-0.283px;">Replace</span>
<svg class="i" style="left:1191.4px;top:95.8px;" width="8" height="11.8" viewBox="0 0 8 11.8"><path d="M0.6 0.6v9l2.2-2 1.6 3.6 1.4-0.6-1.6-3.5h3z" fill="#fff" stroke="#555" stroke-width="0.8" stroke-linejoin="round"/></svg>
<span class="t" id="t68" style="left:1204.20px;top:97.17px;font-size:10.2px;line-height:10.2px;color:#333;letter-spacing:-0.186px;">Select</span>
<svg class="i" style="left:1233.2px;top:101px;" width="3.6" height="2" viewBox="0 0 3.6 2"><path d="M0 0H3.6 L1.8 2 Z" fill="#444"/></svg>
<span class="t" id="t69" style="left:1201.50px;top:118.04px;font-size:9.4px;line-height:9.4px;color:#444;letter-spacing:-0.273px;">Editing</span>
<div class="b" style="left:1250.8px;top:57px;width:1px;height:70px;background:#dadada"></div>
<svg class="i" style="left:1265px;top:120px;" width="8" height="5" viewBox="0 0 8 5"><path d="M0.5 4.4L4 0.9l3.5 3.5" stroke="#444" stroke-width="1.1" fill="none"/></svg>
<div id="doc"><div id="page"></div>
<div class="hd" style="left:599.5px;top:13px;width:66.7px"><span style="transform:scaleX(1.062)">and….</span></div>
<div class="hd" style="left:252px;top:72.5px;width:761.5px"><span style="transform:scaleX(1.0933)">“Lazy teachers are the best teachers because they get the students to do all of</span></div>
<div class="hd" style="left:584px;top:102.5px;width:97.7px"><span style="transform:scaleX(1.0734)">the work”</span></div>
<div class="hd" style="left:576.4px;top:162.5px;width:112.6px"><span style="transform:scaleX(1.0847)">Experience</span></div>
<div class="ln" style="top:226px">These words spoken to me in 2008 by a former colleague got me wondering about my workload as a</div>
<div class="ln" style="top:256px">teacher. Was I spoon-feeding my students too much? Was I giving them too much guidance without</div>
<div class="ln" style="top:286px;width:371.5px;letter-spacing:0.1px">giving them the chance to think for themselves?</div>
<div class="ln" style="top:346px;width:680px;letter-spacing:0.08px">After a difficult self-appraisal, I took a rough-guess that I was somewhere in the middle.</div>
<div class="ln" style="top:406px">It was at this point that I started to write questions on students’ work. <i>‘What is this part called?’</i> on a</div>
<div class="ln" style="top:436px;width:560.5px;letter-spacing:0px">diagram, for example, or simply a <i>‘?’</i> next to something that wasn’t clear.</div>
<div class="b" style="left:1266px;top:0;width:14px;height:538px;background:#dcdcdc"></div>
<div class="b" style="left:1279px;top:0;width:1px;height:538px;background:#e6e6e6"></div>
<div class="b" style="left:1267px;top:1.2px;width:12px;height:12px;background:#fff;border:1px solid #d0d0d0"></div>
<svg class="i" style="left:1270.4px;top:5.6px" width="5.2" height="3" viewBox="0 0 5.2 3"><path d="M0 3L2.6 0 5.2 3z" fill="#555"/></svg>
<div class="b" style="left:1266.6px;top:300px;width:12.8px;height:13.8px;background:#fff;border:1px solid #c2c2c2"></div>
<div class="b" style="left:1267px;top:524.4px;width:12px;height:12.4px;background:#fff;border:1px solid #d0d0d0"></div>
<svg class="i" style="left:1270.4px;top:529.4px" width="5.2" height="3" viewBox="0 0 5.2 3"><path d="M0 0h5.2L2.6 3z" fill="#555"/></svg>
</div>
<div id="status"></div>
<span class="t" id="t70" style="left:5.25px;top:673.45px;font-size:8.8px;line-height:8.8px;color:#444;letter-spacing:-0.040px;">Page 50 of 86</span>
<span class="t" id="t71" style="left:72.75px;top:673.45px;font-size:8.8px;line-height:8.8px;color:#444;letter-spacing:0.028px;">20211 words</span>
<svg class="i" style="left:136px;top:672px;" width="12.4" height="9.4" viewBox="0 0 12.4 9.4"><path d="M0.5 0.8h4.6l1 0.8v7.2l-1-0.8H0.5z" fill="none" stroke="#666" stroke-width="0.8"/><path d="M6.1 1.6l1-0.8h1M6.1 8.8l1-0.8h4.2V5.4" fill="none" stroke="#666" stroke-width="0.8"/><path d="M8.2 0.6l3.4 3.4M11.6 0.6L8.2 4" stroke="#666" stroke-width="0.8"/></svg>
<svg class="i" style="left:1063.6px;top:672px;" width="12.4" height="9.6" viewBox="0 0 12.4 9.6"><path d="M0.5 0.6h4.6l1.1 0.9 1.1-0.9h4.6v7.6H7.3l-1.1 0.9-1.1-0.9H0.5z" fill="none" stroke="#777" stroke-width="0.8"/><path d="M6.2 1.5v7.6M2 2.8h2.4M2 4.4h2.4M2 6h2.4M8 2.8h2.4M8 4.4h2.4M8 6h2.4" stroke="#999" stroke-width="0.6"/></svg>
<div class="b" style="left:1084.2px;top:669px;width:27.6px;height:18px;background:#c8c8c8"></div>
<svg class="i" style="left:1092px;top:672px;" width="12" height="10.6" viewBox="0 0 12 10.6"><rect x="0.5" y="0.5" width="11" height="9.6" fill="#e8e8e8" stroke="#666" stroke-width="0.8"/><path d="M2 2.6h8M2 4.4h8M2 6.2h8M2 8h8" stroke="#666" stroke-width="0.7"/></svg>
<svg class="i" style="left:1120px;top:672px;" width="12.6" height="10.4" viewBox="0 0 12.6 10.4"><rect x="0.5" y="0.5" width="9" height="8.4" fill="none" stroke="#777" stroke-width="0.8"/><path d="M2 2.6h6M2 4.4h4M2 6.2h3" stroke="#888" stroke-width="0.7"/><circle cx="9.4" cy="7.4" r="2.7" fill="#f3f3f3" stroke="#666" stroke-width="0.8"/><path d="M6.8 7.4h5.2M9.4 4.8v5.2" stroke="#666" stroke-width="0.5"/></svg>
<div class="b" style="left:1143.8px;top:676.6px;width:6.2px;height:1.1px;background:#555"></div>
<div class="b" style="left:1152.5px;top:677px;width:83.8px;height:1px;background:#b8b8b8"></div>
<div class="b" style="left:1194.2px;top:673.4px;width:1px;height:8px;background:#b0b0b0"></div>
<div class="b" style="left:1197px;top:672.4px;width:4.2px;height:9.8px;background:#666;border-left:1px solid #444;border-right:1px solid #444"></div>
<div class="b" style="left:1238.8px;top:676.6px;width:6.4px;height:1.1px;background:#555"></div>
<div class="b" style="left:1241.45px;top:673.9px;width:1.1px;height:6.4px;background:#555"></div>
<span class="t" id="t72" style="left:1253.75px;top:673.55px;font-size:8.8px;line-height:8.8px;color:#444;letter-spacing:-0.368px;">150%</span>
<div id="taskbar"></div>
<div class="b" style="left:371px;top:687px;width:40px;height:33px;background:#3a3b3d"></div>
<div class="b" style="left:126px;top:717.9px;width:33.4px;height:2.1px;background:#79b8ec"></div>
<div class="b" style="left:167.2px;top:717.9px;width:33.4px;height:2.1px;background:#79b8ec"></div>
<div class="b" style="left:371px;top:717.9px;width:40px;height:2.1px;background:#79b8ec"></div>
<div class="b" style="left:415.6px;top:717.9px;width:33.8px;height:2.1px;background:#79b8ec"></div>
<svg class="i" style="left:12.6px;top:696.4px;" width="14.8" height="14" viewBox="0 0 14.8 14"><path d="M0 2.1l6-0.9v5.3H0zM6.9 1.1L14.8 0v6.5H6.9zM0 7.4h6v5.3l-6-0.9zM6.9 7.4h7.9V14l-7.9-1.1z" fill="#fff"/></svg>
<svg class="i" style="left:52.8px;top:696.2px;" width="14.6" height="14.2" viewBox="0 0 14.6 14.2"><circle cx="9.2" cy="5.2" r="4.4" fill="none" stroke="#fff" stroke-width="1.1"/><path d="M6.1 8.4L0.6 13.8" stroke="#fff" stroke-width="1.3"/></svg>
<svg class="i" style="left:92.6px;top:695.8px;" width="15" height="14.2" viewBox="0 0 15 14.2"><rect x="1.6" y="3.4" width="7.4" height="7.2" fill="none" stroke="#fff" stroke-width="1.2"/><path d="M0.6 0.4v3M10 0.4v3M0.6 10.8v3M10 10.8v3M13.4 0.4v13.4" stroke="#fff" stroke-width="1.2"/><rect x="12.4" y="5" width="2" height="2.4" fill="#fff"/></svg>
<svg class="i" style="left:134.6px;top:694.8px;" width="17" height="18" viewBox="0 0 17 18"><path d="M3.6 10H14.4A6.2 6.6 0 1 0 12.8 15" fill="none" stroke="#1f7ad6" stroke-width="3.6"/><path d="M0.6 7.6C1.6 3 5 0.6 9 0.6" fill="none" stroke="#1f7ad6" stroke-width="1.4"/></svg>
<svg class="i" style="left:174.6px;top:694.4px;" width="18.8" height="16.4" viewBox="0 0 18.8 16.4"><path d="M0.4 1.2h7l1.4 1.6h9.6v13.2H0.4z" fill="#f7d56a"/><path d="M0.4 3.6h18v2H0.4z" fill="#fbe59a"/><rect x="4.4" y="9" width="10" height="7" fill="#3f9ddc"/><rect x="6.4" y="12" width="6" height="4" fill="#f7d56a"/><rect x="4.4" y="9" width="10" height="1.6" fill="#79c0f0"/></svg>
<svg class="i" style="left:214.4px;top:693px;" width="21.2" height="19.6" viewBox="0 0 21.2 19.6"><path d="M6.6 5.4V4a4 4 0 0 1 8 0v1.4" fill="none" stroke="#e8e8e8" stroke-width="1.1"/><path d="M0.6 5.2h20l-1 14H1.6z" fill="#fff"/><rect x="6.2" y="8.4" width="3.9" height="3.9" fill="#f25022"/><rect x="11" y="8.4" width="3.9" height="3.9" fill="#7fba00"/><rect x="6.2" y="13.2" width="3.9" height="3.9" fill="#00a4ef"/><rect x="11" y="13.2" width="3.9" height="3.9" fill="#ffb900"/></svg>
<div class="b" style="left:256.8px;top:693.1px;width:20.2px;height:20.3px;background:#2aa7d8"></div>
<svg class="i" style="left:256.8px;top:693.1px;" width="20.2" height="20.3" viewBox="0 0 20.2 20.3"><path d="M5.4 14.6l3-11 3.4 11z" fill="#1a2a5a" opacity="0.75"/></svg>
<span class="t" id="t73" style="left:263.80px;top:696.79px;font-size:15.6px;line-height:15.6px;color:#fff;letter-spacing:0.000px;font-weight:bold">L</span>
<svg class="i" style="left:299px;top:693.4px;" width="18.4" height="19.6" viewBox="0 0 18.4 19.6"><path d="M0.4 0.8L9.2 4.4 18 0.8v13.4l-8.8 5-8.8-5z" fill="#c8322e"/><path d="M4.2 6.4l5 2.4 5-2.4v6l-5 2.8-5-2.8z" fill="#101216"/></svg>
<svg class="i" style="left:339px;top:694.8px;" width="20.6" height="16.4" viewBox="0 0 20.6 16.4"><path d="M0.4 5.6L10.3 0.2l9.9 5.4v10.4H0.4z" fill="#fff"/><path d="M2.4 6l15.8 0.2-7 4.4 3.6 1.2-3.6 0.4z" fill="#101216"/></svg>
<svg class="i" style="left:381px;top:693.8px;" width="20.4" height="17.6" viewBox="0 0 20.4 17.6"><rect x="6.4" y="0.4" width="13.6" height="16.8" rx="1" fill="#2b7cd3"/><rect x="6.4" y="0.4" width="13.6" height="4.4" fill="#41a5ee"/><rect x="6.4" y="8.8" width="13.6" height="4.2" fill="#185abd"/><rect x="6.4" y="13" width="13.6" height="4.2" rx="1" fill="#103f91"/><rect x="0.2" y="3.8" width="11" height="10.2" rx="1" fill="#185abd"/></svg>
<span class="t" id="t74" style="left:382.60px;top:699.92px;font-size:8.6px;line-height:8.6px;color:#fff;letter-spacing:0.000px;font-weight:bold">W</span>
<svg class="i" style="left:422.6px;top:693.5px;" width="19" height="19" viewBox="0 0 19 19"><circle cx="9.5" cy="9.5" r="9.4" fill="#db4437"/><path d="M9.5 9.5L1.36 4.8A9.4 9.4 0 0 0 9.1 18.9z" fill="#0f9d58"/><path d="M9.5 9.5l-0.4 9.4A9.4 9.4 0 0 0 17.64 4.8H9.5z" fill="#ffcd40"/><circle cx="9.5" cy="9.5" r="4.3" fill="#f1f1f1"/><circle cx="9.5" cy="9.5" r="3.4" fill="#4285f4"/></svg>
<div class="b" style="left:979.5px;top:695px;width:41.4px;height:15.8px;border:1.2px solid #fff;background:#000"></div>
<div class="b" style="left:981.4px;top:696.9px;width:11.2px;height:12px;background:#24a84a"></div>
<div class="b" style="left:1020.8px;top:699.4px;width:1.8px;height:7.2px;background:#fff"></div>
<span class="t" id="t75" style="left:988.25px;top:697.90px;font-size:12.4px;line-height:12.4px;color:#fff;letter-spacing:-0.356px;">30%</span>
<svg class="i" style="left:1053.6px;top:696px;" width="13" height="13.8" viewBox="0 0 13 13.8"><circle cx="8.8" cy="2.8" r="2.2" fill="none" stroke="#fff" stroke-width="1"/><circle cx="3.8" cy="6.6" r="2" fill="none" stroke="#fff" stroke-width="1"/><path d="M5.8 9.4c0.2-2.6 1.4-3.8 3-3.8s2.8 1.2 3 2.8M0.6 13.4c0.2-2.6 1.4-3.8 3.2-3.8s3 1.2 3.2 3.8" fill="none" stroke="#fff" stroke-width="1"/></svg>
<svg class="i" style="left:1084.4px;top:699.6px;" width="11.4" height="7" viewBox="0 0 11.4 7"><path d="M0.5 6.4L5.7 0.9l5.2 5.5" stroke="#fff" stroke-width="1.1" fill="none"/></svg>
<svg class="i" style="left:1103px;top:698.6px;" width="14.2" height="9" viewBox="0 0 14.2 9"><path d="M3 8.8a2.9 2.9 0 0 1-0.4-5.7A4.2 4.2 0 0 1 10.4 2.4 3.3 3.3 0 0 1 11.2 8.8z" fill="#f4f4f4"/></svg>
<svg class="i" style="left:1123.6px;top:699.8px;" width="14" height="8" viewBox="0 0 14 8"><rect x="0.6" y="0.6" width="11.4" height="6.6" fill="none" stroke="#fff" stroke-width="1"/><rect x="12.2" y="2.4" width="1.4" height="3" fill="#fff"/><rect x="1.8" y="1.8" width="3.4" height="4.2" fill="#fff"/></svg>
<svg class="i" style="left:1144.4px;top:697.4px;" width="12" height="11.6" viewBox="0 0 12 11.6"><path d="M0.6 11A10.4 10.4 0 0 1 11 0.6" fill="none" stroke="#9a9a9a" stroke-width="1"/><path d="M3.6 11A7.4 7.4 0 0 1 11 3.6" fill="none" stroke="#fff" stroke-width="1"/><path d="M6.4 11A4.6 4.6 0 0 1 11 6.4" fill="none" stroke="#fff" stroke-width="1"/><circle cx="10" cy="10.2" r="1.2" fill="#fff"/></svg>
<svg class="i" style="left:1162.4px;top:698.6px;" width="13.4" height="9.6" viewBox="0 0 13.4 9.6"><path d="M0.5 3h2.2l3-2.6v8.8l-3-2.6H0.5z" fill="none" stroke="#fff" stroke-width="0.9"/><path d="M8.4 2.6l4.4 4.4M12.8 2.6L8.4 7" stroke="#fff" stroke-width="0.9"/></svg>
<span class="t" id="t76" style="left:1190.50px;top:691.47px;font-size:10.2px;line-height:10.2px;color:#fff;letter-spacing:-0.406px;">6:34 PM</span>
<span class="t" id="t77" style="left:1185.00px;top:706.47px;font-size:10.2px;line-height:10.2px;color:#fff;letter-spacing:0.115px;">9/28/2019</span>
<svg class="i" style="left:1246px;top:696.8px;" width="18" height="19" viewBox="0 0 18 19"><path d="M0.6 0.6h12.4v9H5.2L2.6 12V9.6H0.6z" fill="#fff"/><path d="M2.6 3h8.4M2.6 5.1h8.4M2.6 7.2h5" stroke="#0e0f12" stroke-width="0.7"/><circle cx="12.3" cy="13.2" r="5.2" fill="#0e0f12" stroke="#fff" stroke-width="0.9"/></svg>
<span class="t" id="t78" style="left:1255.90px;top:706.09px;font-size:8.4px;line-height:8.4px;color:#fff;letter-spacing:0.000px;font-weight:bold">8</span>
</div>
</body></html>
